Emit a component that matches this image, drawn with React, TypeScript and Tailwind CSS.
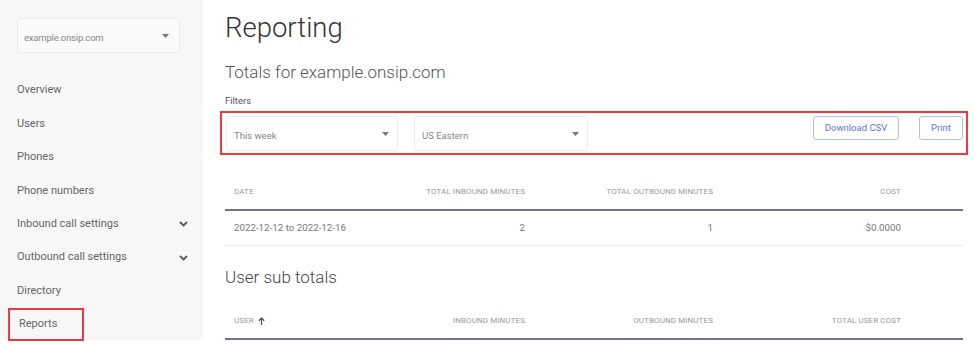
import React from "react";

const navItems = [
  { label: "Overview" },
  { label: "Users" },
  { label: "Phones" },
  { label: "Phone numbers" },
  { label: "Inbound call settings", expandable: true },
  { label: "Outbound call settings", expandable: true },
  { label: "Directory" },
  { label: "Reports", active: true },
];

function Caret() {
  return (
    <svg width="7" height="4" viewBox="0 0 7 4" className="shrink-0">
      <path d="M0 0h7L3.5 4z" fill="#777" />
    </svg>
  );
}

function Chevron() {
  return (
    <svg width="9" height="6" viewBox="0 0 9 6" className="shrink-0">
      <path d="M1 1l3.5 3.5L8 1" fill="none" stroke="#555" strokeWidth="1.8" />
    </svg>
  );
}

function Select({ value, width }: { value: string; width: string }) {
  return (
    <div
      className={`${width} h-[35px] flex items-center justify-between pl-[7px] pr-[8px] border border-[#ececec] rounded-[3px] bg-white`}
    >
      <span className="text-[9.5px] text-[#888] pt-[5px]">{value}</span>
      <Caret />
    </div>
  );
}

export default function App() {
  return (
    <div
      className="flex w-[975px] h-[352px] bg-white overflow-hidden"
      style={{ fontFamily: "Roboto, 'Liberation Sans', sans-serif" }}
    >
      {/* Sidebar */}
      <aside className="w-[203px] h-[340px] bg-[#f7f7f7] shrink-0 pt-[18px]">
        <div className="ml-[17px] w-[163px] h-[35px] flex items-center justify-between pl-[6px] pr-[10px] border border-[#e8e8e8] rounded-[3px] bg-[#fafafa]">
          <span className="text-[9.5px] text-[#888] pt-[6px] tracking-[-0.2px]">example.onsip.com</span>
          <Caret />
        </div>
        <nav className="mt-[21px] flex flex-col">
          {navItems.map((item) => (
            <div key={item.label} className="h-[33.4px] flex items-center pl-[8px] pr-[15px]">
              <div
                className={`flex-1 flex items-center justify-between h-full pl-[9px] ${
                  item.active ? "max-w-[76px] border-2 border-[#f03a3a] pl-[7px] h-[32px]" : ""
                }`}
              >
                <span className="text-[11px] text-[#666]">{item.label}</span>
                {item.expandable && <Chevron />}
              </div>
            </div>
          ))}
        </nav>
      </aside>

      {/* Main */}
      <main className="flex-1 pl-[17px] pr-[7px] pt-[12px]">
        <h1 className="h-[32px] leading-[32px] text-[27.5px] font-light text-[#333] pl-[5px]">Reporting</h1>
        <h2 className="mt-[16px] h-[24px] leading-[24px] text-[17px] font-light text-[#555] pl-[5px]">
          Totals for example.onsip.com
        </h2>
        <div className="mt-[10px] h-[14px] leading-[14px] text-[9.5px] text-[#555] pl-[5px]">Filters</div>

        <div className="mt-[3px] h-[44px] border-2 border-[#f03a3a] flex items-start pt-[3px] pl-[4px] pr-[3px]">
          <Select value="This week" width="w-[172px]" />
          <div className="ml-[16px]">
            <Select value="US Eastern" width="w-[174px]" />
          </div>
          <div className="ml-auto flex gap-[20px]">
            <button className="w-[86px] h-[24px] border border-[#adc0f6] rounded-[3px] text-[9.5px] text-[#5b78d2]">
              Download CSV
            </button>
            <button className="w-[44px] h-[24px] border border-[#adc0f6] rounded-[3px] text-[9.5px] text-[#5b78d2]">
              Print
            </button>
          </div>
        </div>

        {/* Totals table */}
        <div className="mt-[19px] ml-[5px] w-[738px]">
          <div className="grid grid-cols-[150px_150px_188px_188px] h-[37px] items-center border-b-2 border-[#717189] text-[8px] text-[#999] uppercase tracking-[0.1px]">
            <span className="pl-[9px]">Date</span>
            <span className="text-right">Total inbound minutes</span>
            <span className="text-right">Total outbound minutes</span>
            <span className="text-right">Cost</span>
          </div>
          <div className="grid grid-cols-[150px_150px_188px_188px] h-[35px] items-center border-b border-[#ededed] text-[9.75px] text-[#777]">
            <span className="pl-[9px] whitespace-nowrap">2022-12-12 to 2022-12-16</span>
            <span className="text-right">2</span>
            <span className="text-right">1</span>
            <span className="text-right">$0.0000</span>
          </div>
        </div>

        <h2 className="mt-[19px] h-[24px] leading-[24px] text-[17px] font-light text-[#444] pl-[5px]">
          User sub totals
        </h2>

        <div className="mt-[14px] ml-[5px] w-[738px]">
          <div className="grid grid-cols-[150px_150px_188px_188px] h-[37px] items-center border-b-2 border-[#717189] text-[8px] text-[#999] uppercase tracking-[0.1px]">
            <span className="pl-[9px] flex items-center gap-[4px]">
              User
              <svg width="7" height="8" viewBox="0 0 7 8">
                <path d="M3.5 8V1.5M0.8 3.8L3.5 1l2.7 2.8" fill="none" stroke="#555" strokeWidth="1.3" />
              </svg>
            </span>
            <span className="text-right">Inbound minutes</span>
            <span className="text-right">Outbound minutes</span>
            <span className="text-right">Total user cost</span>
          </div>
        </div>
      </main>
    </div>
  );
}
